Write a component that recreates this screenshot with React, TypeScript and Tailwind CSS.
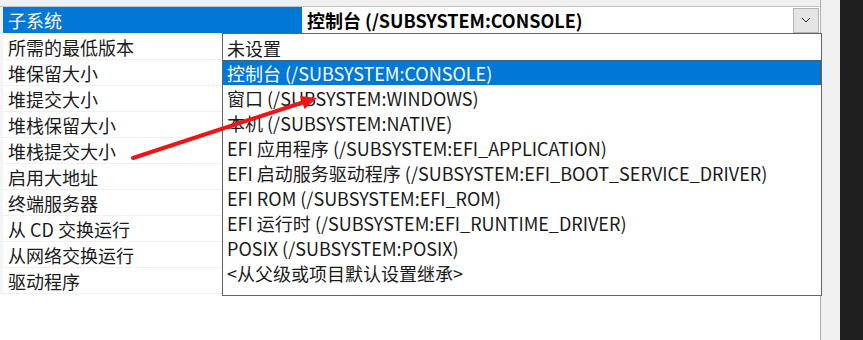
import React from 'react';

const labels = [
  '所需的最低版本',
  '堆保留大小',
  '堆提交大小',
  '堆栈保留大小',
  '堆栈提交大小',
  '启用大地址',
  '终端服务器',
  '从 CD 交换运行',
  '从网络交换运行',
  '驱动程序',
];

const options = [
  '未设置',
  '控制台 (/SUBSYSTEM:CONSOLE)',
  '窗口 (/SUBSYSTEM:WINDOWS)',
  '本机 (/SUBSYSTEM:NATIVE)',
  'EFI 应用程序 (/SUBSYSTEM:EFI_APPLICATION)',
  'EFI 启动服务驱动程序 (/SUBSYSTEM:EFI_BOOT_SERVICE_DRIVER)',
  'EFI ROM (/SUBSYSTEM:EFI_ROM)',
  'EFI 运行时 (/SUBSYSTEM:EFI_RUNTIME_DRIVER)',
  'POSIX (/SUBSYSTEM:POSIX)',
  '<从父级或项目默认设置继承>',
];

const font = { fontFamily: '"Noto Sans CJK SC", "Noto Sans", sans-serif' };

function App() {
  return (
    <div className="relative flex w-[863px] h-[340px] overflow-hidden bg-white text-[18px] leading-none text-[#1a1a1a]" style={font}>
      {/* property grid */}
      <div className="flex flex-col w-[821px] border-r border-[#b0b0b0]">
        <div className="h-[7px] bg-[#f0f0f0] border-b border-[#c4c4c4]" />
        <div className="flex h-[26px]">
          <div className="w-[3px] bg-[#f0f0f0]" />
          <div className="w-[299px] bg-[#0078d7] text-white flex items-center pl-[5px]">子系统</div>
          <div className="flex-1 flex items-center justify-between pl-[5px] pr-[1px]">
            <span className="font-bold text-black">控制台 (/SUBSYSTEM:CONSOLE)</span>
            <div className="w-[26px] h-[25px] bg-[#e5e5e5] border border-[#b4b4b4] flex items-center justify-center">
              <svg width="10" height="6" viewBox="0 0 10 6">
                <path d="M1 1 L5 5 L9 1" fill="none" stroke="#333" strokeWidth="1" />
              </svg>
            </div>
          </div>
        </div>
        <div className="flex flex-col">
          {labels.map((l) => (
            <div key={l} className="flex h-[26px] border-t border-[#f0f0f0]">
              <div className="w-[3px] bg-[#f4f4f4]" />
              <div className="w-[220px] flex items-center pl-[5px]">{l}</div>
            </div>
          ))}
        </div>
        <div className="flex-1 border-t border-[#f0f0f0]" />
      </div>
      <div className="w-[19px] bg-[#f0f0f0]" />
      <div className="flex-1 bg-[#1f1f1f]" />

      {/* open dropdown list */}
      <div className="absolute left-[222px] top-[33px] w-[600px] h-[263px] bg-white border border-[#646464] pt-[1px]">
        {options.map((o, i) => (
          <div
            key={o}
            className={
              i === 1
                ? 'h-[25px] flex items-center pl-[4px] bg-[#0078d7] text-white border-t border-r border-dotted border-[#7a4a18]'
                : 'h-[25px] flex items-center pl-[4px]'
            }
          >
            {o}
          </div>
        ))}
      </div>

      {/* red annotation arrow */}
      <svg className="absolute left-0 top-0 pointer-events-none" width="863" height="340">
        <line x1="133" y1="158" x2="304" y2="102" stroke="#f01414" strokeWidth="4" strokeLinecap="round" />
        <polygon points="317,98 304.5,109 300,96" fill="#f01414" />
      </svg>
    </div>
  );
}

export default App;
